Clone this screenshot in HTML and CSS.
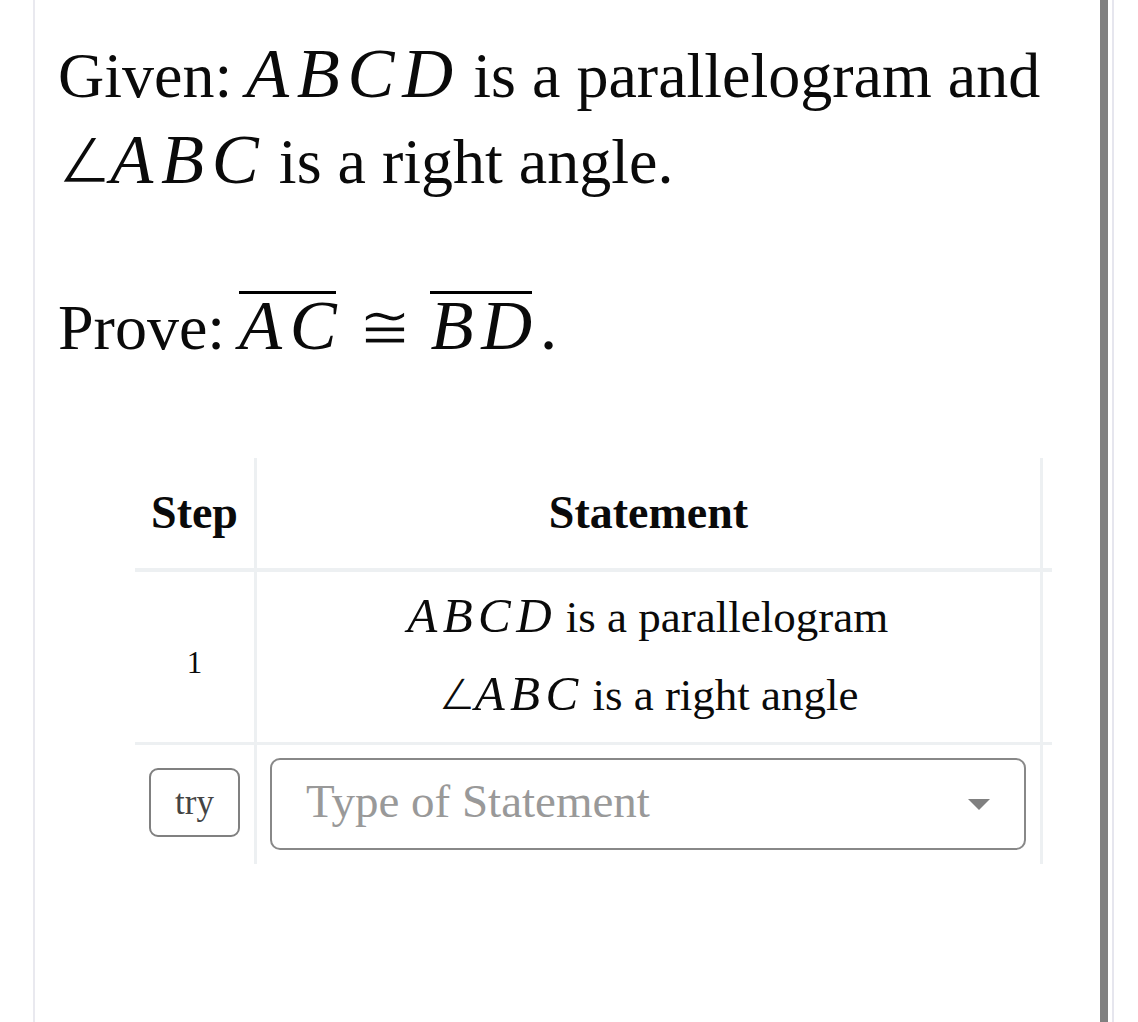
FILE: index.html
```html
<!DOCTYPE html>
<html lang="en">
<head>
<meta charset="utf-8">
<title>Proof</title>
<link rel="stylesheet" href="styles.css">
</head>
<body>
<div class="page">
  <div class="frame">
    <p class="given">Given: <span class="m">ABCD</span> is a parallelogram and <span class="m"><span class="sym ang">∠</span>ABC</span> is a right angle.</p>
    <p class="prove">Prove: <span class="m end"><span class="ov">AC</span><span class="sym rel">≅</span><span class="ov">BD</span><span class="pt">.</span></span></p>
    <div class="proof">
      <div class="cell head c1">Step</div>
      <div class="cell head c2">Statement</div>
      <div class="cell head c3"></div>
      <div class="cell row c1"><span class="num">1</span></div>
      <div class="cell row c2">
        <div class="line"><span class="m">ABCD</span> is a parallelogram</div>
        <div class="line"><span class="m"><span class="sym ang">∠</span>ABC</span> is a right angle</div>
      </div>
      <div class="cell row c3"></div>
      <div class="cell last c1"><button class="try" type="button">try</button></div>
      <div class="cell last c2">
        <div class="select"><span class="ph">Type of Statement</span><span class="caret"></span></div>
      </div>
      <div class="cell last c3"></div>
    </div>
  </div>
  <div class="scroll"></div>
  <div class="edge"></div>
</div>
</body>
</html>
```
FILE: styles.css
```css
html, body {
  margin: 0;
  padding: 0;
  background: #fff;
}

body {
  font-family: "Liberation Serif", "Times New Roman", serif;
  color: #0a0a0a;
}

.page {
  display: flex;
  height: 1022px;
  overflow: hidden;
}

.frame {
  box-sizing: border-box;
  width: 1067px;
  margin-left: 33px;
  border-left: 2px solid #e9e9ef;
  padding: 33px 0 0 23px;
}

.scroll {
  width: 8px;
  background: #808080;
}

.edge {
  width: 2px;
  margin-left: 4px;
  background: #e6e6ee;
}

.given,
.prove {
  margin: 0;
  font-size: 64px;
  line-height: 86px;
}

.prove {
  margin-top: 80px;
}

.m {
  font-style: italic;
  font-size: 1.1em;
  letter-spacing: 0.11em;
  line-height: 1;
  margin-left: -0.03em;
  margin-right: -0.05em;
}

.m.end {
  margin-right: 0;
}

.pt {
  font-style: normal;
  letter-spacing: 0;
}

.sym {
  font-family: "DejaVu Sans", sans-serif;
  font-style: normal;
  letter-spacing: 0;
  -webkit-text-stroke: 2.5px #fff;
}

.ang {
  font-size: 0.9em;
  margin-right: -0.04em;
}

.rel {
  font-size: 0.9em;
  margin: 0 0.3em 0 0.22em;
  -webkit-text-stroke: 1.4px #fff;
}

.row .sym {
  -webkit-text-stroke: 1.8px #fff;
}

.ov {
  background: linear-gradient(#000, #000) 0 5px / calc(100% - 0.11em) 3px no-repeat;
}

.proof {
  display: grid;
  grid-template-columns: 122px 786px 9px;
  grid-template-rows: 114px 173px 119px;
  margin: 87px 0 0 77px;
  font-size: 45px;
}

.cell {
  box-sizing: border-box;
}

.c1,
.c2 {
  border-right: 3px solid #edf0f2;
}

.head {
  border-bottom: 4px solid #edf0f2;
  font-weight: bold;
  font-size: 46px;
  line-height: 1;
  padding-top: 32px;
  text-align: center;
}

.row {
  border-bottom: 3px solid #edf0f2;
  text-align: center;
}

.row.c1 {
  padding-top: 75px;
  font-size: 31px;
  line-height: 1;
}

.row.c2 {
  padding-top: 6px;
  line-height: 78px;
}

.row .m {
  font-size: 1.09em;
}

.try {
  display: block;
  box-sizing: border-box;
  width: 91px;
  height: 69px;
  margin: 23px auto 0;
  padding: 0;
  border: 2px solid #808080;
  border-radius: 9px;
  background: #fff;
  font-family: "Liberation Serif", "Times New Roman", serif;
  font-size: 35px;
  color: #444;
}

.select {
  box-sizing: border-box;
  display: flex;
  align-items: center;
  justify-content: space-between;
  width: 756px;
  height: 92px;
  margin: 13px 0 0 13px;
  padding: 0 34px 0 34px;
  border: 2px solid #888;
  border-radius: 10px;
}

.ph {
  font-size: 47px;
  line-height: 1;
  color: #999;
  margin-bottom: 6px;
}

.caret {
  width: 0;
  height: 0;
  border-left: 11px solid transparent;
  border-right: 11px solid transparent;
  border-top: 11px solid #808080;
}
```
